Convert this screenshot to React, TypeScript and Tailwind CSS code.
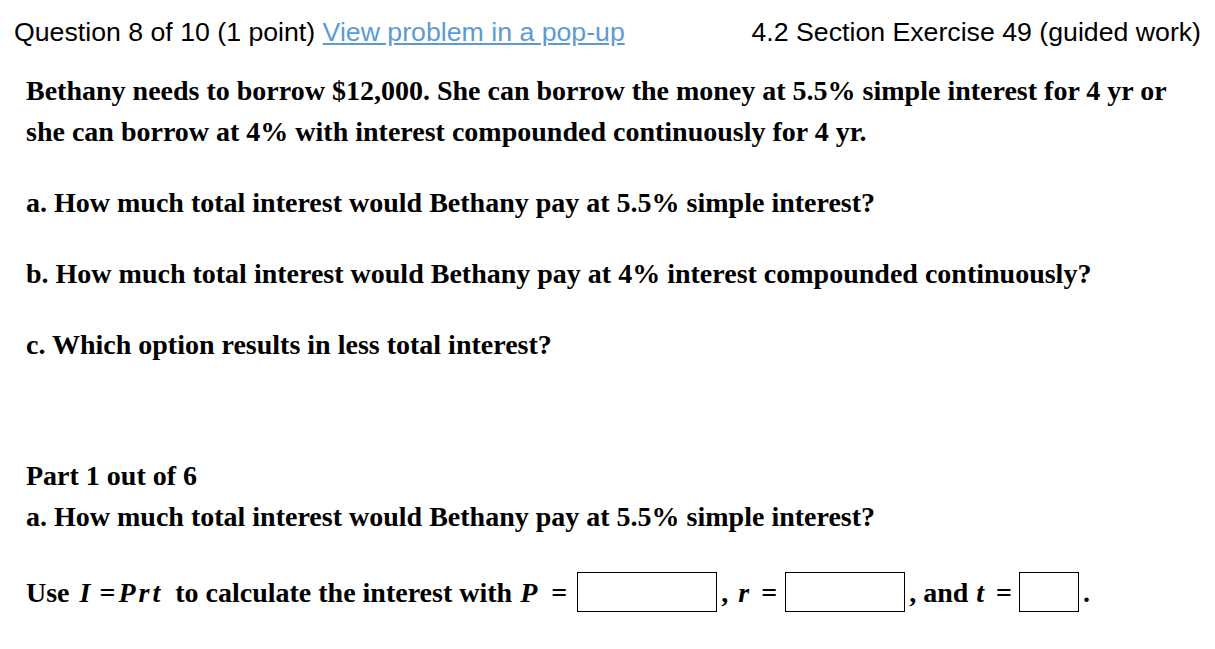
const serif = "font-['Liberation_Serif','Times_New_Roman',serif]";

const AnswerBox = ({ width }: { width: string }) => (
  <span className={`inline-block h-[40px] ${width} shrink-0 border border-black bg-white`} />
);

const Header = () => (
  <div className="flex items-center justify-between pl-[14px] pr-[14px] pt-[12px] font-['Liberation_Sans',Arial,sans-serif] text-[26.7px] leading-[40px] text-black">
    <div>
      Question 8 of 10 (1 point){" "}
      <a href="#" className="text-[#5b9bd5] underline underline-offset-2">
        View problem in a pop-up
      </a>
    </div>
    <div>4.2 Section Exercise 49 (guided work)</div>
  </div>
);

export default function App() {
  return (
    <div className="min-h-[649px] w-[1215px] bg-white text-black">
      <Header />
      <div className={`${serif} pl-[26px] text-[28px] font-bold leading-[41px]`}>
        <p className="mt-[18px] w-[1160px]">
          Bethany needs to borrow $12,000. She can borrow the money at 5.5% simple interest for 4 yr or
          she can borrow at 4% with interest compounded continuously for 4 yr.
        </p>
        <p className="mt-[30px]">a. How much total interest would Bethany pay at 5.5% simple interest?</p>
        <p className="mt-[30px]">b. How much total interest would Bethany pay at 4% interest compounded continuously?</p>
        <p className="mt-[30px]">c. Which option results in less total interest?</p>

        <p className="mt-[90px]">Part 1 out of 6</p>
        <p>a. How much total interest would Bethany pay at 5.5% simple interest?</p>

        <div className="mt-[35px] flex h-[40px] items-center whitespace-nowrap">
          <span>Use</span>
          <span className="ml-[10px] italic">I</span>
          <span className="ml-[9px]">=</span>
          <span className="ml-[3px] italic tracking-[3px]">Prt</span>
          <span className="ml-[12px]">to calculate the interest with</span>
          <span className="ml-[8px] italic">P</span>
          <span className="ml-[14px] mr-[10px]">=</span>
          <AnswerBox width="w-[140px]" />
          <span className="ml-[4px]">,</span>
          <span className="ml-[10px] italic">r</span>
          <span className="ml-[12px] mr-[8px]">=</span>
          <AnswerBox width="w-[120px]" />
          <span className="ml-[4px]">, and</span>
          <span className="ml-[8px] italic">t</span>
          <span className="ml-[12px] mr-[7px]">=</span>
          <AnswerBox width="w-[60px]" />
          <span className="ml-[4px]">.</span>
        </div>
      </div>
    </div>
  );
}
